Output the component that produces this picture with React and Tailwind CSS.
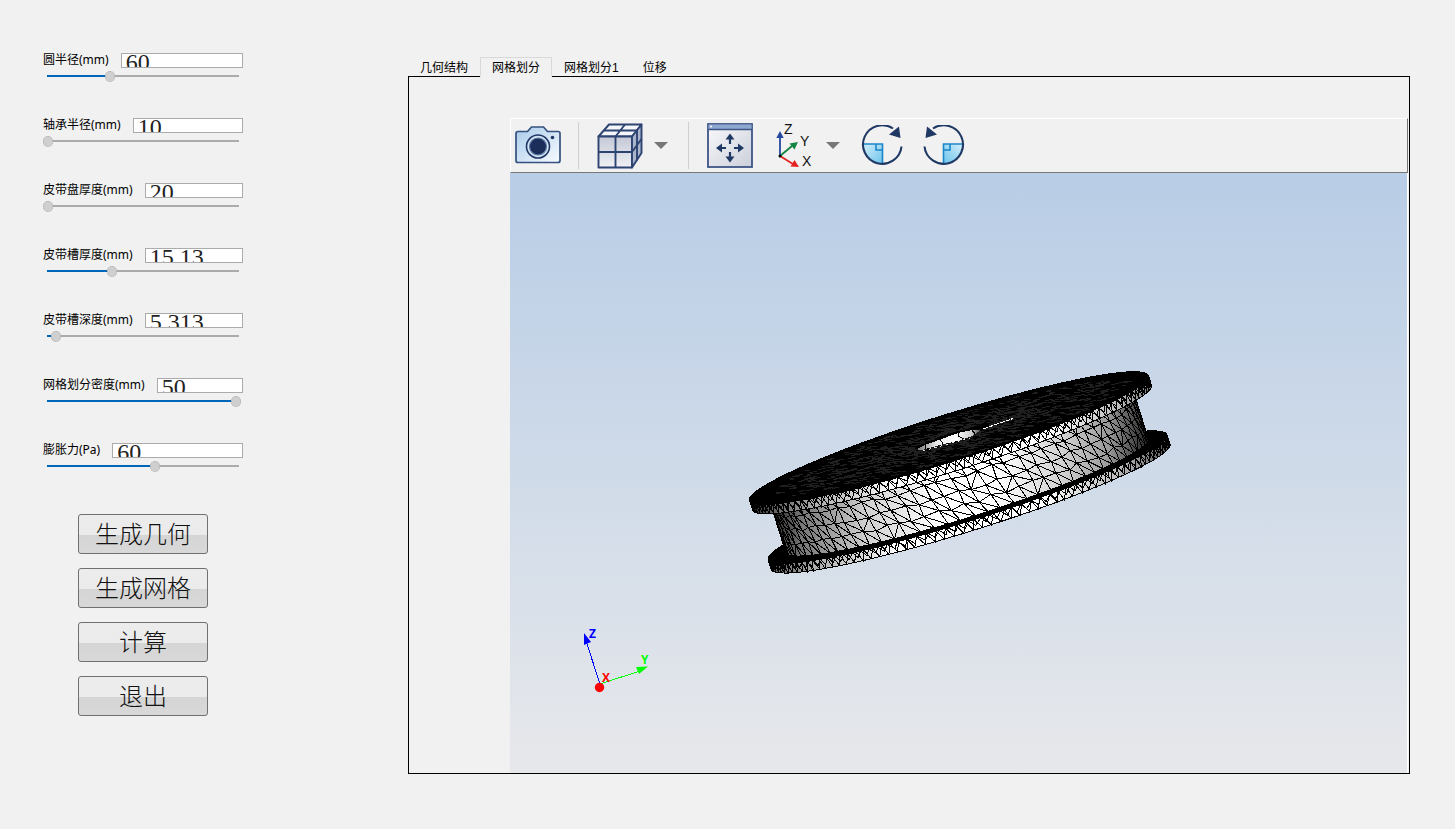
import React, { useState } from 'react';

const PARAMETERS = [
  { id: 'radius', label: '圆半径(mm)', value: '60', position: 33 },
  { id: 'bearing', label: '轴承半径(mm)', value: '10', position: 0 },
  { id: 'disc', label: '皮带盘厚度(mm)', value: '20', position: 0 },
  { id: 'groove-width', label: '皮带槽厚度(mm)', value: '15.13', position: 34 },
  { id: 'groove-depth', label: '皮带槽深度(mm)', value: '5.313', position: 4 },
  { id: 'density', label: '网格划分密度(mm)', value: '50', position: 100 },
  { id: 'force', label: '膨胀力(Pa)', value: '60', position: 57 },
];

const TABS = ['几何结构', '网格划分', '网格划分1', '位移'];

const NAVY = '#1f3864';

const ParameterRow = ({ param }) => {
  const [value, setValue] = useState(param.value);
  const [position, setPosition] = useState(param.position);
  const fill = `calc((100% - 10px) * ${position / 100}) 2px, calc(100% - 6px) 2px`;

  return (
    <div className="h-[65px]">
      <div className="flex items-center gap-3 h-4">
        <label htmlFor={param.id} className="text-xs leading-4 text-black whitespace-nowrap">{param.label}</label>
        <input
          id={param.id}
          type="text"
          value={value}
          onChange={(e) => setValue(e.target.value)}
          className="flex-1 min-w-0 h-[15px] pl-1 pt-1 text-2xl leading-6 font-['Liberation_Serif',serif] text-[#222] bg-white border border-[#ababab] outline-none overflow-hidden"
        />
      </div>
      <input
        type="range"
        aria-label={param.label}
        min="0"
        max="100"
        value={position}
        onChange={(e) => setPosition(Number(e.target.value))}
        style={{ backgroundSize: fill }}
        className="block w-[198px] h-3 mt-[2px] appearance-none bg-transparent bg-no-repeat bg-[position:4px_center] bg-[image:linear-gradient(#0067b8,#0067b8),linear-gradient(#ababab,#ababab)] [&::-webkit-slider-thumb]:appearance-none [&::-webkit-slider-thumb]:w-[10px] [&::-webkit-slider-thumb]:h-[11px] [&::-webkit-slider-thumb]:rounded-full [&::-webkit-slider-thumb]:bg-[#cfcfcf] [&::-webkit-slider-thumb]:border [&::-webkit-slider-thumb]:border-dotted [&::-webkit-slider-thumb]:border-[#ababab]"
      />
    </div>
  );
};

const ActionButton = ({ children }) => (
  <button
    type="button"
    className="h-10 w-full rounded-[3px] border border-[#707070] bg-[linear-gradient(#ececec_0,#ebebeb_20px,#d5d5d5_20px,#d8d8d8_100%)] text-2xl leading-8 font-light text-[#111]"
  >
    {children}
  </button>
);

/* ---------- toolbar icons ---------- */

const CameraIcon = () => (
  <svg width="46" height="46" viewBox="0 0 46 46">
    <defs>
      <linearGradient id="camBody" x1="0" y1="0" x2="1" y2="1">
        <stop offset="0" stopColor="#a9cbea" />
        <stop offset="1" stopColor="#f7fbff" />
      </linearGradient>
    </defs>
    <path d="M3 8.500H12.500L16.500 4H28.500L32.500 8.500H43Q45 8.500 45 10.500V37.500Q45 39.500 43 39.500H3Q1 39.500 1 37.500V10.500Q1 8.500 3 8.500Z" fill="url(#camBody)" stroke="#34517f" strokeWidth="1.700" />
    <circle cx="23" cy="23.500" r="11.500" fill="#d3e3f4" stroke={NAVY} strokeWidth="1.600" />
    <circle cx="23" cy="23.500" r="8.500" fill="#1b2d59" stroke="#5f7da6" strokeWidth="1.200" />
    <circle cx="37.500" cy="14.500" r="1.800" fill={NAVY} />
  </svg>
);

const CubeIcon = () => (
  <svg width="46" height="46" viewBox="0 0 46 46" strokeLinejoin="round">
    <defs>
      <linearGradient id="cubeFront" x1="0" y1="0" x2="0" y2="1">
        <stop offset="0" stopColor="#c3c8d5" />
        <stop offset="1" stopColor="#f0f1f5" />
      </linearGradient>
    </defs>
    <g stroke="#2d4372" strokeWidth="1.900">
      <path d="M1.500 13.500L12 1.500H44.500L35 13.500Z" fill="#f5f6fa" />
      <path d="M1.500 13.500H35V44.500H1.500Z" fill="url(#cubeFront)" />
      <path d="M35 13.500L44.500 1.500V30L35 44.500Z" fill="#aab4ca" />
      <path d="M18.500 44.500V13.500L28 1.500M1.500 29H35L44.500 16M7 7.500H40V37.500" fill="none" />
    </g>
  </svg>
);

const FitIcon = () => (
  <svg width="46" height="46" viewBox="0 0 46 46">
    <defs>
      <linearGradient id="fitBody" x1="0" y1="0" x2="1" y2="1">
        <stop offset="0" stopColor="#fafafc" />
        <stop offset="1" stopColor="#cbcfda" />
      </linearGradient>
    </defs>
    <rect x="1" y="1" width="44" height="43" fill="url(#fitBody)" stroke="#3d5585" strokeWidth="1.800" />
    <rect x="1.500" y="1.500" width="43" height="4.500" fill="#8da8d0" />
    <path d="M1 6.500H45" stroke="#3d5585" strokeWidth="1.400" />
    <circle cx="4" cy="3.500" r="1" fill="#fff" />
    <g stroke={NAVY} strokeWidth="2.200">
      <path d="M23 21V15M23 29V35M19 25H13M27 25H33" />
    </g>
    <path d="M23 10.500L27.500 16.500H18.500ZM23 39.500L27.500 33.500H18.500ZM9 25L15 20.500V29.500ZM37 25L31 20.500V29.500Z" fill={NAVY} />
  </svg>
);

const AxesIcon = () => (
  <svg width="40" height="52" viewBox="0 -1 40 52" className="overflow-visible">
    <path d="M6 35V15" stroke="#24489d" strokeWidth="1.800" />
    <path d="M6 10L9.700 17H2.300Z" fill="#24489d" />
    <path d="M6 35L18 25" stroke="#148540" strokeWidth="1.800" />
    <path d="M24 21L20.500 28.500L15.500 22.500Z" fill="#148540" />
    <path d="M6 35L19 43" stroke="#e42320" strokeWidth="1.800" />
    <path d="M25 46L16.500 45.500L20.500 39Z" fill="#e42320" />
    <circle cx="6" cy="35" r="1.500" fill="#000" />
    <g fill="#111" fontSize="14" fontFamily="Liberation Sans, sans-serif">
      <text x="10" y="13">Z</text>
      <text x="26" y="25">Y</text>
      <text x="28" y="45">X</text>
    </g>
  </svg>
);

const RotateIcon = ({ mirrored }) => (
  <svg width="42" height="42" viewBox="0 0 42 42">
    <defs>
      <linearGradient id="quarter" x1="0" y1="0" x2="1" y2="1">
        <stop offset="0" stopColor="#d5f0fb" />
        <stop offset="1" stopColor="#6cc3ec" />
      </linearGradient>
    </defs>
    <g transform={mirrored ? 'translate(42 0) scale(-1 1)' : undefined}>
      <path d="M1.500 19H21.500V38.500A19.300 19.300 0 0 1 1.500 19Z" fill="url(#quarter)" />
      <path d="M1.500 19H21.500V38.500M15 19V25H21.500" fill="none" stroke="#1b86c8" strokeWidth="1.600" />
      <path d="M32 3.500A19.300 19.300 0 1 0 40.500 21.500" fill="none" stroke={NAVY} strokeWidth="2.100" />
      <path d="M38 1.500L39.500 13L28 9.500Z" fill={NAVY} />
    </g>
  </svg>
);

const DropArrow = ({ label }) => (
  <button type="button" aria-label={label} className="shrink-0 border-x-[7px] border-t-[7px] border-x-transparent border-t-[#777]" />
);

const Separator = () => <div className="w-px h-[47px] bg-[#cfcfcf] shrink-0" />;

const Toolbar = () => (
  <div className="flex items-center h-[55px] pl-1 border-t border-t-white border-r border-b border-r-[#777] border-b-[#777] border-l border-l-white">
    <button type="button" aria-label="Screenshot"><CameraIcon /></button>
    <div className="pl-[17px] pr-[18px]"><Separator /></div>
    <div className="flex items-center gap-[11px]">
      <button type="button" aria-label="View"><CubeIcon /></button>
      <DropArrow label="View options" />
    </div>
    <div className="pl-[20px] pr-[18px]"><Separator /></div>
    <button type="button" aria-label="Fit all"><FitIcon /></button>
    <div className="flex items-center gap-3 pl-[21px]">
      <button type="button" aria-label="Axes"><AxesIcon /></button>
      <DropArrow label="Axes options" />
    </div>
    <div className="flex items-center gap-5 pl-[21px]">
      <button type="button" aria-label="Rotate clockwise"><RotateIcon /></button>
      <button type="button" aria-label="Rotate counterclockwise"><RotateIcon mirrored /></button>
    </div>
  </div>
);

/* ---------- meshed pulley ---------- */

const TILT = (17.4 * Math.PI) / 180;
const CENTER = { x: 439, y: 265 };
const RATIO = 0.112;

// point on the pulley surface: radius, angle around the axis, depth along the axis
const surface = (radius, angle, depth) => {
  const across = radius * Math.cos(angle);
  const along = radius * RATIO * Math.sin(angle) + depth;
  return [
    CENTER.x + across * Math.cos(TILT) + along * Math.sin(TILT),
    CENTER.y - across * Math.sin(TILT) + along * Math.cos(TILT),
  ];
};

const fmt = ([x, y]) => `${x.toFixed(1)} ${y.toFixed(1)}`;

const arc = (radius, depth, from, to) => {
  const points = [];
  for (let i = 0; i <= 60; i++) points.push(fmt(surface(radius, from + ((to - from) * i) / 60, depth)));
  return points;
};

const noise = (i, j) => {
  const s = Math.sin(i * 127.1 + j * 311.7) * 43758.5453;
  return s - Math.floor(s) - 0.5;
};

const clampAngle = (angle) => Math.min(Math.PI, Math.max(0, angle));

const band = (radius, top, bottom) =>
  `M${arc(radius, top, 0, Math.PI).join('L')}L${arc(radius, bottom, Math.PI, 0).join('L')}Z`;

const disc = (radius, depth) => `M${arc(radius, depth, 0, Math.PI * 2).join('L')}Z`;

// grid over the front half of a cylinder, one diagonal in each cell
const meshWall = (radius, top, bottom, columns, rows, jitter) => {
  const step = Math.PI / columns;
  const node = (i, j) => {
    const edge = j === 0 || j === rows;
    const angle = clampAngle((i - j * 0.25 + noise(i, j) * jitter) * step);
    const depth = top + ((bottom - top) * (j + (edge ? 0 : noise(j, i) * jitter))) / rows;
    return fmt(surface(radius, angle, depth));
  };
  let d = '';
  for (let j = 0; j < rows; j++) {
    for (let i = 0; i <= columns + 1; i++) {
      const flipped = (i * 7 + j * 3) % 11 === 0;
      d += `M${node(i, j)}L${node(i, j + 1)}L${node(i + 1, j + 1)}`;
      d += flipped ? `M${node(i, j)}L${node(i + 1, j + 1)}` : `L${node(i + 1, j)}M${node(i + 1, j)}L${node(i, j + 1)}`;
    }
  }
  return d;
};

const zigzag = (radius, top, bottom, columns) => {
  const points = [];
  for (let i = 0; i <= columns; i++) {
    const angle = clampAngle(((i + noise(i, 3) * 0.5) * Math.PI) / columns);
    points.push(fmt(surface(radius, angle, i % 2 ? top : bottom)));
  }
  return `M${points.join('L')}`;
};

const Flange = ({ depth }) => (
  <g fill="none" stroke="#000">
    <path d={band(209, depth, depth + 10)} fill="url(#flangeShade)" />
    <path d={zigzag(209, depth, depth + 6, 120)} />
    <path d={zigzag(209, depth, depth + 10, 130)} />
    <path d={disc(209, depth)} fill="#000" />
  </g>
);

// short grey flecks left between the dense lines of the top face
const flecks = () => {
  let d = '';
  for (let i = 0; i < 900; i++) {
    const radius = 40 + (noise(i, 1) + 0.5) * 145;
    const angle = (noise(i, 2) + 0.5) * Math.PI * 2;
    const [x, y] = surface(radius, angle, 0);
    const length = 3 + (noise(i, 5) + 0.5) * 6;
    d += `M${x.toFixed(0)} ${y.toFixed(0)}l${length.toFixed(0)} ${(-length * 0.25).toFixed(0)}`;
  }
  return d;
};

const Pulley = () => (
  <g shapeRendering="crispEdges">
    <Flange depth={62} />
    <path d={band(190, 5, 61)} fill="url(#grooveShade)" stroke="#000" />
    <path d={meshWall(190, 5, 61, 42, 4, 0.3)} fill="none" stroke="#000" />
    <path d={`M${arc(190, 61, 0, Math.PI).join('L')}`} fill="none" stroke="#000" strokeWidth="2" />
    <Flange depth={0} />
    <path d={flecks()} fill="none" stroke="#1f1f1f" />
    <path d="M407 276L415 272L430 266.500L448 260L462 257L471 257L462 263L447 268L430 272L410 277.500Z" fill="url(#boreShade)" />
    <path d="M415 272V276M430 266L433 271M448 260V263L454 266M462 257L465 261" fill="none" stroke="#000" />
    <path d="M473 256L503 245.500" stroke="#fff" strokeDasharray="5 1" />
    <path d="M413 278L460 265" stroke="#ddd" strokeDasharray="2 4" />
  </g>
);

const Triad = () => (
  <g>
    <g shapeRendering="crispEdges">
      <path d="M90 511L76 468" stroke="#00f" />
      <path d="M90 511L130 498" stroke="#0f0" />
    </g>
    <path d="M74 460L81 469L74 472Z" fill="#00f" />
    <path d="M138 493.500L129 501L126 494Z" fill="#0f0" />
    <circle cx="89.500" cy="514.500" r="4.700" fill="#f00" />
    <g fontSize="12" fontWeight="700" fontFamily="Open Sans, sans-serif">
      <text x="79" y="465" fill="#00f">Z</text>
      <text x="131" y="491" fill="#0f0">Y</text>
      <text x="92" y="509" fill="#f00">X</text>
    </g>
  </g>
);

const Viewport = () => (
  <div className="flex-1 flex border-r border-white bg-linear-to-b from-[#b8cde6] to-[#e7e8eb]">
    <svg className="block w-full h-auto" viewBox="0 0 897 600" role="img" aria-label="网格划分">
      <defs>
        <linearGradient id="grooveShade" gradientUnits="userSpaceOnUse" x1="262" y1="0" x2="636" y2="0">
          <stop offset="0" stopColor="#222" />
          <stop offset="0.080" stopColor="#777" />
          <stop offset="0.250" stopColor="#cfcfcf" />
          <stop offset="0.450" stopColor="#fff" />
          <stop offset="0.600" stopColor="#fff" />
          <stop offset="0.780" stopColor="#d0d0d0" />
          <stop offset="0.900" stopColor="#999" />
          <stop offset="1" stopColor="#2a2a2a" />
        </linearGradient>
        <linearGradient id="flangeShade" gradientUnits="userSpaceOnUse" x1="240" y1="0" x2="660" y2="0">
          <stop offset="0" stopColor="#333" />
          <stop offset="0.150" stopColor="#aaa" />
          <stop offset="0.350" stopColor="#fff" />
          <stop offset="0.700" stopColor="#fff" />
          <stop offset="0.880" stopColor="#bbb" />
          <stop offset="1" stopColor="#555" />
        </linearGradient>
        <linearGradient id="boreShade" gradientUnits="userSpaceOnUse" x1="407" y1="0" x2="471" y2="0">
          <stop offset="0" stopColor="#777" />
          <stop offset="0.300" stopColor="#e8e8e8" />
          <stop offset="0.600" stopColor="#fff" />
          <stop offset="0.850" stopColor="#ccc" />
          <stop offset="1" stopColor="#444" />
        </linearGradient>
      </defs>
      <Pulley />
      <Triad />
    </svg>
  </div>
);

const TabBar = ({ active, onSelect }) => (
  <div role="tablist" className="flex h-5 -mb-px relative font-['Liberation_Sans','Noto_Sans_CJK_SC',sans-serif]">
    {TABS.map((tab, idx) => (
      <button
        key={tab}
        type="button"
        role="tab"
        aria-selected={idx === active}
        onClick={() => onSelect(idx)}
        className={`px-[11px] pt-[2px] text-xs leading-4 text-black border ${idx === active ? 'border-[#d9d9d9] border-b-[#f1f1f1] bg-[#f1f1f1]' : 'border-transparent'}`}
      >
        {tab}
      </button>
    ))}
  </div>
);

const App = () => {
  const [active, setActive] = useState(1);

  return (
    <main className="min-h-screen flex bg-[#f1f1f1] font-['Noto_Sans','Noto_Sans_CJK_SC',sans-serif]">
      <aside className="w-[243px] shrink-0 pl-[43px] pt-[52px]">
        {PARAMETERS.map((param) => <ParameterRow key={param.id} param={param} />)}
        <div className="w-[130px] ml-[35px] mt-[7px] flex flex-col gap-[14px]">
          <ActionButton>生成几何</ActionButton>
          <ActionButton>生成网格</ActionButton>
          <ActionButton>计算</ActionButton>
          <ActionButton>退出</ActionButton>
        </div>
      </aside>
      <section className="flex-1 min-w-0 flex flex-col ml-[165px] mr-[45px] pt-[57px] pb-[55px]">
        <TabBar active={active} onSelect={setActive} />
        <div className="flex-1 flex flex-col border border-black pl-[101px] pr-px pt-[41px]">
          <Toolbar />
          <Viewport />
        </div>
      </section>
    </main>
  );
};

export default App;
